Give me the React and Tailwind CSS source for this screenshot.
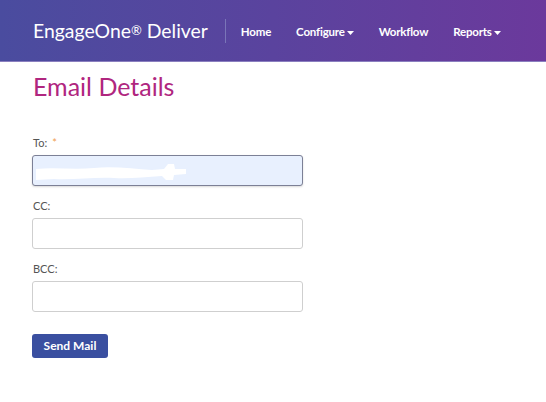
import React from "react";

function Caret() {
  return (
    <svg width="7" height="4" viewBox="0 0 7 4" className="ml-[2px] mt-[1px]">
      <path d="M0 0h7L3.5 4z" fill="currentColor" />
    </svg>
  );
}

function NavItem({ children, dropdown }) {
  return (
    <span className="flex items-center text-[11.5px] font-bold text-white tracking-[-0.2px]">
      {children}
      {dropdown && <Caret />}
    </span>
  );
}

function Field({ label, required, filled }) {
  return (
    <div className="flex flex-col">
      <label className="text-[11px] leading-[14px] text-[#555] h-[14px] pl-[1px]">
        {label}
        {required && <span className="ml-[5px] text-[#f0a050]">*</span>}
      </label>
      <div
        className={
          filled
            ? "relative mt-[5px] h-[31px] w-[271px] rounded-[3px] border border-[#7c8096] bg-[#e8f0fe] shadow-[0_1px_2px_rgba(0,0,0,0.15)]"
            : "relative mt-[5px] h-[31px] w-[271px] rounded-[3px] border border-[#cfcfcf] bg-white"
        }
      >
        {filled && (
          <svg
            width="160"
            height="22"
            viewBox="0 0 160 22"
            className="absolute left-[1px] top-[5px]"
          >
            <path
              d="M2 8 C20 6 40 9 60 7 C80 5 100 8 118 9 L130 8 L134 3 L140 3 L141 8 L152 8 L152 13 L140 14 L139 19 L132 19 L128 15 C110 16 95 18 80 17 C60 16 40 19 20 18 L2 19 Z"
              fill="#ffffff"
            />
          </svg>
        )}
      </div>
    </div>
  );
}

export default function App() {
  return (
    <div
      className="h-[402px] w-[546px] bg-white"
      style={{ fontFamily: "Lato, 'Open Sans', sans-serif" }}
    >
      <header className="flex h-[62px] items-center bg-gradient-to-r from-[#4a4c9f] via-[#5a439e] to-[#6b399c] border-b border-[#8a7fbf] pl-[33px]">
        <span className="text-[19.4px] font-normal leading-none text-white">
          EngageOne<sup className="text-[13px] relative top-[-3px]">®</sup> Deliver
        </span>
        <span className="ml-[17px] h-[24px] w-px bg-[#7a75b8]" />
        <nav className="ml-[15px] flex items-center gap-[25px] pt-[3px]">
          <NavItem>Home</NavItem>
          <NavItem dropdown>Configure</NavItem>
          <NavItem>Workflow</NavItem>
          <NavItem dropdown>Reports</NavItem>
        </nav>
      </header>

      <main className="px-[32px]">
        <h1 className="mt-[8px] text-[25px] font-normal leading-[32px] text-[#b0267f] pl-[1px]">
          Email Details
        </h1>
        <form className="mt-[34px] flex flex-col gap-[13px]">
          <Field label="To:" required filled />
          <Field label="CC:" />
          <Field label="BCC:" />
        </form>
        <button className="mt-[22px] h-[24px] w-[76px] rounded-[3px] bg-[#3a4fa0] text-[12px] font-bold text-white">
          Send Mail
        </button>
      </main>
    </div>
  );
}
